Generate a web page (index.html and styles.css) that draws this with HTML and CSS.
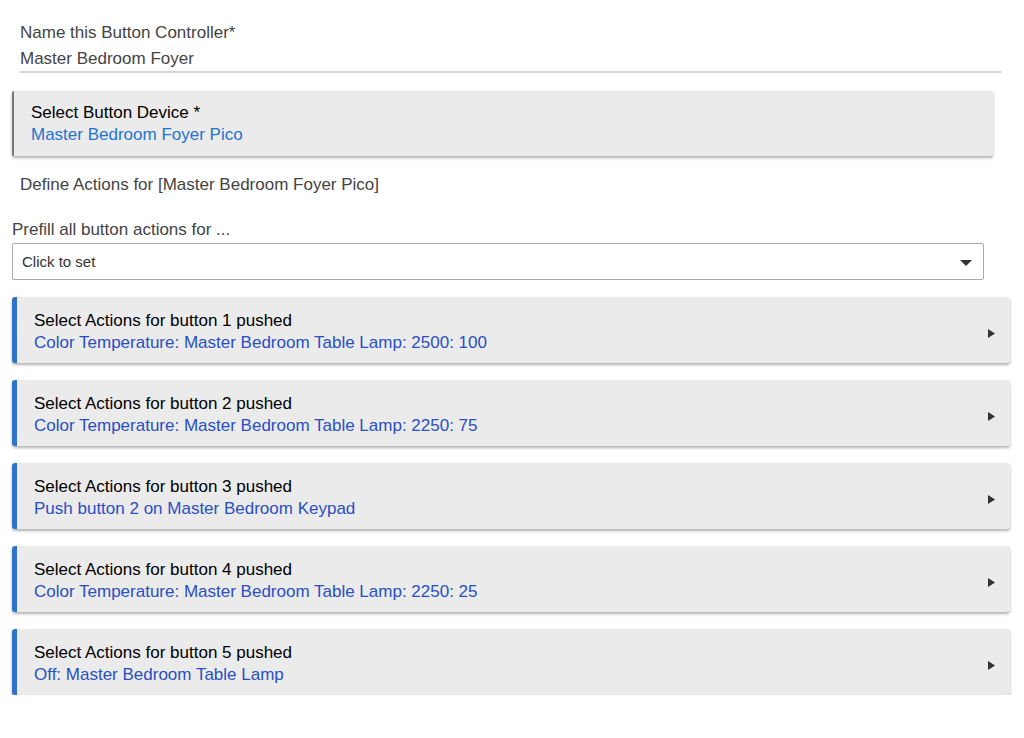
FILE: index.html
```html
<!DOCTYPE html>
<html lang="en">
<head>
    <meta charset="UTF-8">
    <meta name="viewport" content="width=device-width, initial-scale=1.0">
    <title>Button Controller</title>
    <link rel="stylesheet" href="styles.css">
</head>
<body>
    <div class="page">
        <div class="name-field">
            <div class="field-label">Name this Button Controller*</div>
            <div class="field-value">Master Bedroom Foyer</div>
        </div>

        <div class="device-box">
            <div class="box-title">Select Button Device *</div>
            <div class="device-link">Master Bedroom Foyer Pico</div>
        </div>

        <p class="define-text">Define Actions for [Master Bedroom Foyer Pico]</p>

        <div class="prefill">
            <div class="prefill-label">Prefill all button actions for ...</div>
            <div class="select-box">
                <span>Click to set</span>
                <svg class="caret" width="12" height="6" viewBox="0 0 12 6"><path d="M0 0h12L6 6z" fill="#333"/></svg>
            </div>
        </div>

        <div class="action-list">
            <div class="action-card">
                <div class="action-text">
                    <div class="box-title">Select Actions for button 1 pushed</div>
                    <div class="action-link">Color Temperature: Master Bedroom Table Lamp: 2500: 100</div>
                </div>
                <svg class="arrow" width="7" height="9" viewBox="0 0 7 9"><path d="M0 0L7 4.5L0 9z" fill="#333"/></svg>
            </div>
            <div class="action-card">
                <div class="action-text">
                    <div class="box-title">Select Actions for button 2 pushed</div>
                    <div class="action-link">Color Temperature: Master Bedroom Table Lamp: 2250: 75</div>
                </div>
                <svg class="arrow" width="7" height="9" viewBox="0 0 7 9"><path d="M0 0L7 4.5L0 9z" fill="#333"/></svg>
            </div>
            <div class="action-card">
                <div class="action-text">
                    <div class="box-title">Select Actions for button 3 pushed</div>
                    <div class="action-link">Push button 2 on Master Bedroom Keypad</div>
                </div>
                <svg class="arrow" width="7" height="9" viewBox="0 0 7 9"><path d="M0 0L7 4.5L0 9z" fill="#333"/></svg>
            </div>
            <div class="action-card">
                <div class="action-text">
                    <div class="box-title">Select Actions for button 4 pushed</div>
                    <div class="action-link">Color Temperature: Master Bedroom Table Lamp: 2250: 25</div>
                </div>
                <svg class="arrow" width="7" height="9" viewBox="0 0 7 9"><path d="M0 0L7 4.5L0 9z" fill="#333"/></svg>
            </div>
            <div class="action-card">
                <div class="action-text">
                    <div class="box-title">Select Actions for button 5 pushed</div>
                    <div class="action-link">Off: Master Bedroom Table Lamp</div>
                </div>
                <svg class="arrow" width="7" height="9" viewBox="0 0 7 9"><path d="M0 0L7 4.5L0 9z" fill="#333"/></svg>
            </div>
        </div>
    </div>
</body>
</html>
```

FILE: styles.css
```css
body {
    margin: 0;
    font-family: "Liberation Sans", Arial, sans-serif;
    font-size: 17px;
    line-height: 22px;
    color: #444;
    background-color: #fff;
}
.page {
    padding: 22px 0 0 12px;
}
.name-field {
    margin-left: 8px;
    width: 981px;
    padding-bottom: 1px;
    border-bottom: 2px solid #d4d4d4;
}
.field-value {
    margin-top: 4px;
}
.device-box {
    margin-top: 18px;
    width: 962px;
    padding: 11px 0 10px 17px;
    background-color: #ebebeb;
    border-left: 2px solid #777;
    border-radius: 2px;
    box-shadow: 0 2px 3px rgba(0,0,0,0.3);
}
.box-title {
    color: #000;
}
.device-link {
    color: #1f74cf;
}
.define-text {
    margin: 18px 0 0 8px;
}
.prefill {
    margin-top: 23px;
}
.select-box {
    margin-top: 2px;
    height: 35px;
    width: 961px;
    padding-left: 9px;
    border: 1px solid #aaa;
    border-radius: 2px;
    display: flex;
    align-items: center;
    justify-content: space-between;
    font-size: 15px;
    color: #333;
}
.caret {
    margin: 2px 11px 0 0;
}
.action-list {
    margin-top: 17px;
    display: flex;
    flex-direction: column;
    gap: 17px;
    width: 998px;
}
.action-card {
    display: flex;
    align-items: center;
    justify-content: space-between;
    padding: 13px 0 9px 17px;
    background-color: #ebebeb;
    border-left: 5px solid #2f73c9;
    border-radius: 3px;
    box-shadow: 0 2px 3px rgba(0,0,0,0.3);
}
.action-link {
    color: #2a4fc4;
}
.arrow {
    margin: 3px 15px 0 0;
}
```
